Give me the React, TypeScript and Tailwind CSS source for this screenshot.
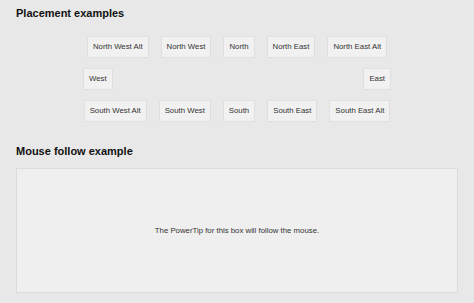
const north = ['North West Alt', 'North West', 'North', 'North East', 'North East Alt'];
const south = ['South West Alt', 'South West', 'South', 'South East', 'South East Alt'];

const TipButton = ({ label }: { label: string }) => (
    <div className="h-[22px] px-[5px] flex items-center bg-[#f1f1f1] border border-[#e0e0e0] text-[7.8px] text-[#333] whitespace-nowrap">
        {label}
    </div>
);

export default function App() {
    return (
        <div
            className="w-[474px] h-[303px] bg-[#e8e8e8] px-[16px] pt-[5px] overflow-hidden"
            style={{ fontFamily: '"Liberation Sans", Arial, sans-serif' }}
        >
            <h2 className="text-[11px] font-bold text-[#111] h-[16px] leading-[16px]">Placement examples</h2>
            <div className="mt-[15px] flex justify-center gap-[12px]">
                {north.map((n) => (
                    <TipButton key={n} label={n} />
                ))}
            </div>
            <div className="mt-[10px] flex justify-between px-[67px]">
                <TipButton label="West" />
                <TipButton label="East" />
            </div>
            <div className="mt-[10px] flex justify-center gap-[12px]">
                {south.map((s) => (
                    <TipButton key={s} label={s} />
                ))}
            </div>
            <h2 className="mt-[21px] text-[11px] font-bold text-[#111] h-[16px] leading-[16px]">Mouse follow example</h2>
            <div className="mt-[9px] h-[125px] bg-[#efefef] border border-[#dcdcdc] flex items-center justify-center text-[7.8px] text-[#333]">
                The PowerTip for this box will follow the mouse.
            </div>
        </div>
    );
}
